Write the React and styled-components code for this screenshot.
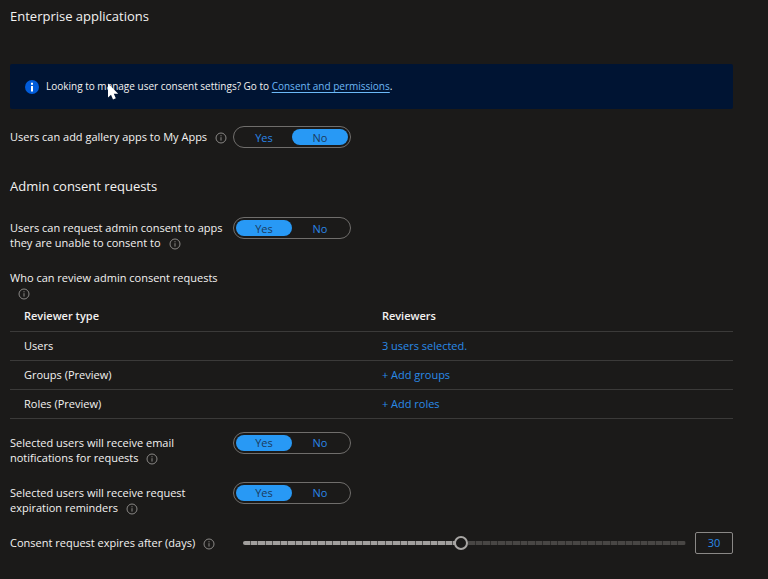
import React, { useState } from 'react';
import styled, { createGlobalStyle } from 'styled-components';

const GlobalStyle = createGlobalStyle`
  * {
    box-sizing: border-box;
  }

  body {
    margin: 0;
    background: #1b1a19;
    color: #f3f2f1;
    font: 11px/15px "Open Sans", "Noto Sans", sans-serif;
  }
`;

const Page = styled.main`
  padding: 7px 35px 16px 10px;
`;

const Title = styled.h2`
  margin: 0 0 ${({ $gap }) => $gap}px;
  font-size: 13px;
  font-weight: 400;
  line-height: 18px;
`;

const Banner = styled.div`
  position: relative;
  display: flex;
  align-items: center;
  gap: 7px;
  min-height: 45px;
  margin-bottom: 17px;
  padding: 0 15px;
  border-radius: 2px;
  background: #001433;
  font-size: 10px;

  p {
    margin: 0;
  }

  a {
    color: #6cb8f6;
    text-underline-offset: 2px;
  }
`;

const Pointer = styled.svg`
  position: absolute;
  top: 19px;
  left: 97px;
`;

const Row = styled.div`
  display: grid;
  grid-template-columns: 223px 1fr;
  align-items: start;
  margin-bottom: ${({ $gap }) => $gap}px;
`;

const Label = styled.div`
  max-width: 221px;
  padding-top: 3px;
`;

const InfoButton = styled.button`
  width: 12px;
  height: 12px;
  margin: 0 0 0 8px;
  padding: 0;
  border: 0;
  background: none;
  color: #8a8886;
  vertical-align: -3px;
  cursor: pointer;

  svg {
    display: block;
  }
`;

const ToggleBox = styled.div`
  display: flex;
  justify-content: space-between;
  width: 118px;
  height: 22px;
  padding: 2px;
  border: 1px solid #706e6c;
  border-radius: 11px;
`;

const Option = styled.label`
  display: flex;
  align-items: center;
  justify-content: center;
  width: 56px;
  border-radius: 8px;
  color: #2a86e8;
  cursor: pointer;

  &:has(input:checked) {
    background: #2899f5;
    color: #1b3a5c;
  }

  input {
    position: absolute;
    opacity: 0;
    pointer-events: none;
  }
`;

const Table = styled.table`
  width: 100%;
  margin-bottom: 13px;
  border-collapse: collapse;
  table-layout: fixed;
  text-align: left;

  th,
  td {
    padding: 0 14px;
    border-bottom: 1px solid #3b3a39;
  }

  th {
    height: 31px;
    font-weight: 600;
  }

  th:first-child {
    width: 49.5%;
  }

  td {
    height: 29px;
  }
`;

const LinkButton = styled.button`
  display: block;
  padding: 0;
  border: 0;
  background: none;
  color: #2a8ae8;
  font: inherit;
  cursor: pointer;
`;

const SliderBox = styled.div`
  display: flex;
  align-items: center;
  gap: 9px;
  padding-left: 10px;
`;

const Slider = styled.input`
  flex: 1;
  min-width: 0;
  height: 14px;
  margin: 0;
  appearance: none;
  background: none;
  cursor: pointer;

  &::-webkit-slider-runnable-track {
    height: 4px;
    border-radius: 2px;
    background:
      repeating-linear-gradient(to right, transparent 0 calc(100% / 59 - 1px), rgba(27, 26, 25, 0.6) calc(100% / 59 - 1px) calc(100% / 59)),
      linear-gradient(to right, #a19f9d var(--fill), #484644 var(--fill));
  }

  &::-webkit-slider-thumb {
    width: 14px;
    height: 14px;
    margin-top: -5px;
    appearance: none;
    border: 2px solid #a8a6a4;
    border-radius: 50%;
    background: #1b1a19;
  }
`;

const Days = styled.input`
  width: 38px;
  height: 22px;
  padding: 0;
  border: 1px solid #8a8886;
  border-radius: 2px;
  background: transparent;
  color: #2a8ae8;
  font: inherit;
  text-align: center;
`;

const Info = () => (
  <InfoButton type="button" aria-label="More information">
    <svg width="12" height="12" viewBox="0 0 12 12" fill="none" stroke="currentColor">
      <circle cx="6" cy="6" r="5" />
      <path d="M6 5.2v3.4M6 3.2v1.1" />
    </svg>
  </InfoButton>
);

const Toggle = ({ name, label, initial }) => {
  const [value, setValue] = useState(initial);

  return (
    <ToggleBox role="radiogroup" aria-label={label}>
      {['Yes', 'No'].map((option) => (
        <Option key={option}>
          <input
            type="radio"
            name={name}
            checked={value === option}
            onChange={() => setValue(option)}
          />
          {option}
        </Option>
      ))}
    </ToggleBox>
  );
};

const ToggleRow = ({ name, label, initial, gap }) => (
  <Row $gap={gap}>
    <Label>
      {label}
      <Info />
    </Label>
    <Toggle name={name} label={label} initial={initial} />
  </Row>
);

const reviewers = [
  { type: 'Users', action: '3 users selected.' },
  { type: 'Groups (Preview)', action: '+ Add groups' },
  { type: 'Roles (Preview)', action: '+ Add roles' },
];

const App = () => {
  const [days, setDays] = useState(30);
  const changeDays = (e) => setDays(Number(e.target.value));

  return (
    <Page>
      <GlobalStyle />
      <Title $gap={39}>Enterprise applications</Title>
      <Banner>
        <svg width="14" height="14" viewBox="0 0 14 14">
          <circle cx="7" cy="7" r="7" fill="#015cda" />
          <path d="M6 6h2v5.4H6zM6 2.7h2v2H6z" fill="#fff" />
        </svg>
        <p>
          Looking to manage user consent settings? Go to <a href="#consent">Consent and permissions</a>.
        </p>
        <Pointer width="12" height="18" viewBox="0 0 12 18">
          <path d="M1 0.5v14l3-2.8 2 4.8 2.8-1.2-2-4.6h4.4z" fill="#fff" />
        </Pointer>
      </Banner>
      <ToggleRow name="gallery" label="Users can add gallery apps to My Apps" initial="No" gap={29} />

      <Title $gap={22}>Admin consent requests</Title>
      <ToggleRow name="request" label="Users can request admin consent to apps they are unable to consent to" initial="Yes" gap={17} />
      <Row $gap={0}>
        <Label>
          Who can review admin consent requests
          <Info />
        </Label>
      </Row>
      <Table>
        <thead>
          <tr>
            <th scope="col">Reviewer type</th>
            <th scope="col">Reviewers</th>
          </tr>
        </thead>
        <tbody>
          {reviewers.map(({ type, action }) => (
            <tr key={type}>
              <td>{type}</td>
              <td><LinkButton type="button">{action}</LinkButton></td>
            </tr>
          ))}
        </tbody>
      </Table>
      <ToggleRow name="email" label="Selected users will receive email notifications for requests" initial="Yes" gap={17} />
      <ToggleRow name="reminders" label="Selected users will receive request expiration reminders" initial="Yes" gap={17} />
      <Row $gap={0}>
        <Label>
          <label htmlFor="days">Consent request expires after (days)</label>
          <Info />
        </Label>
        <SliderBox>
          <Slider
            id="days"
            type="range"
            min="1"
            max="60"
            value={days}
            onChange={changeDays}
            style={{ '--fill': `${((days - 1) / 59) * 100}%` }}
          />
          <Days aria-label="Days" inputMode="numeric" value={days} onChange={changeDays} />
        </SliderBox>
      </Row>
    </Page>
  );
};

export default App;
